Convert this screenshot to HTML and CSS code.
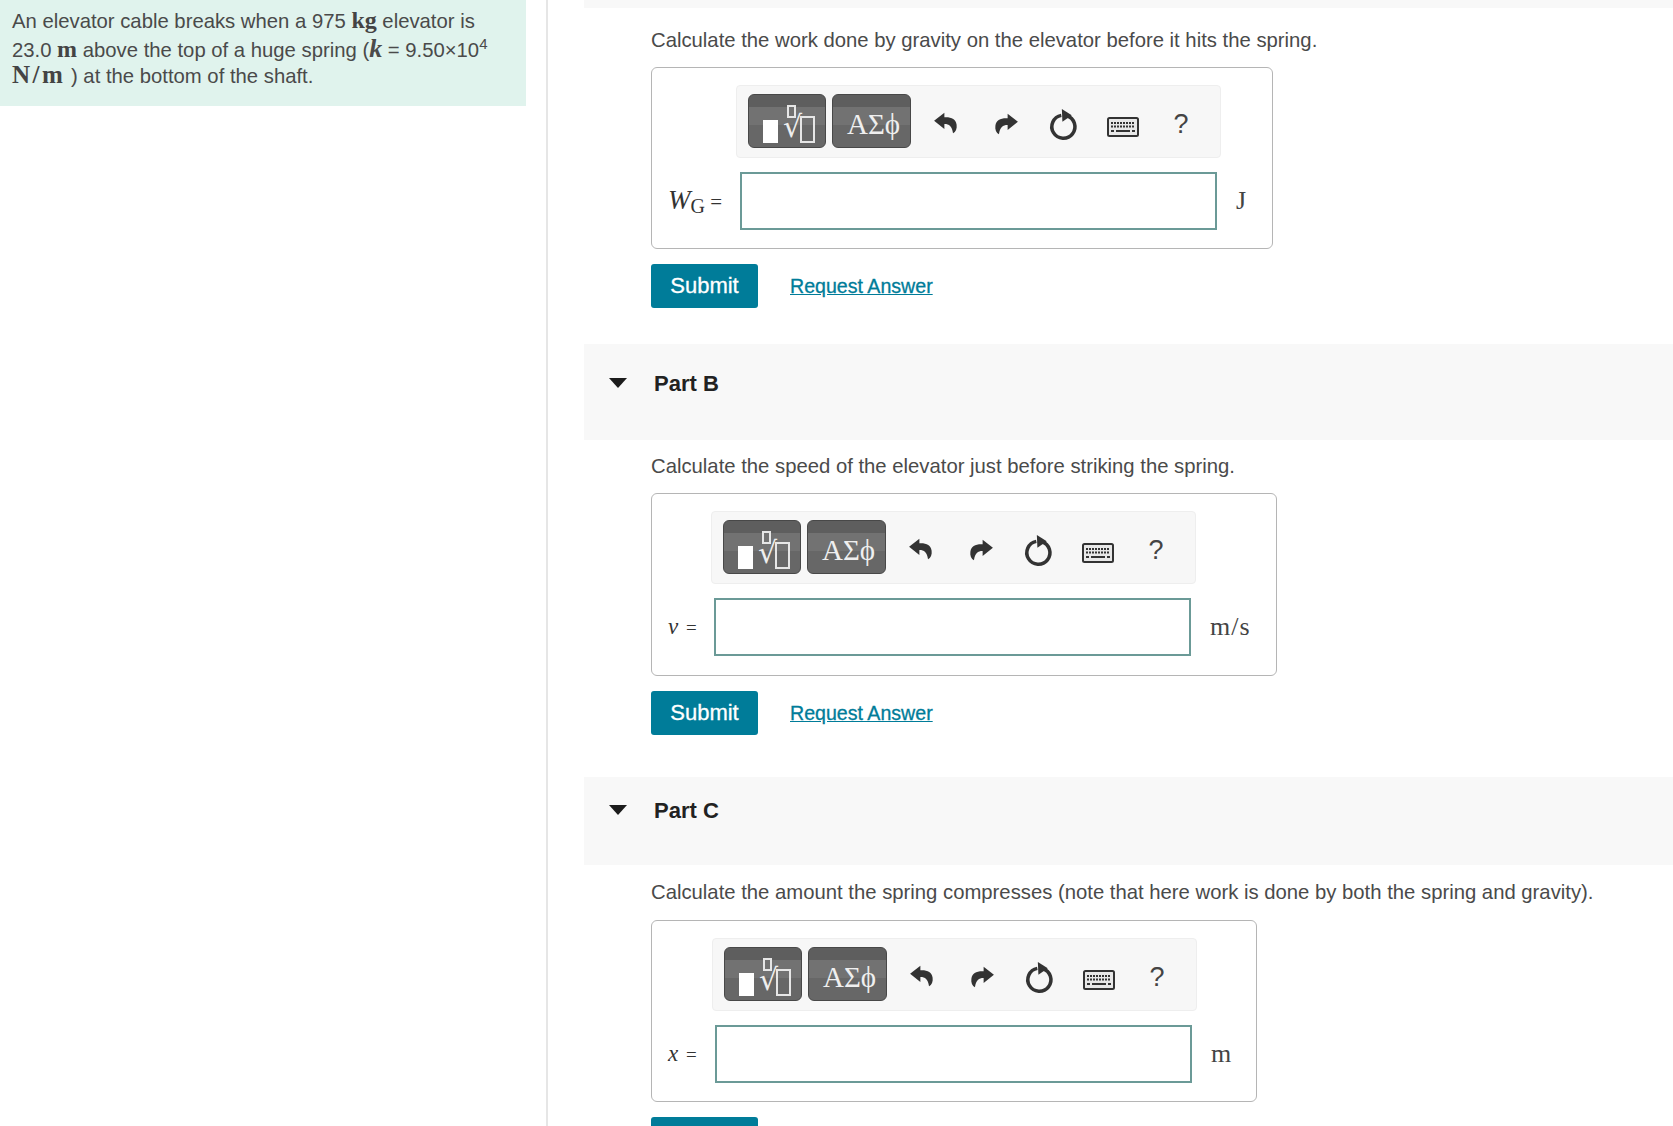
FILE: index.html
```html
<!DOCTYPE html>
<html lang="en">
<head>
<meta charset="utf-8">
<title>Elevator problem</title>
<link rel="stylesheet" href="styles.css">
</head>
<body>
<svg class="defs" aria-hidden="true">
  <defs>
    <symbol id="i-undo" viewBox="0 0 24 24"><path d="M10.500 2.500 1 10l9.500 7.500v-4.600c4.500 0 7 2 8 8.600 2.500-1.500 3.800-4.500 3.300-8C21 8.200 17 6.400 10.500 6.700z"/></symbol>
    <symbol id="i-redo" viewBox="0 0 24 24"><path d="M13.500 2.500 23 10l-9.500 7.500v-4.600c-4.500 0-7 2-8 8.600-2.500-1.500-3.800-4.500-3.300-8C3 8.200 7 6.400 13.500 6.700z"/></symbol>
    <symbol id="i-reset" viewBox="0 0 30 30"><path d="M18 7a10.500 10.500 0 1 1-5-.3" fill="none" stroke="currentColor" stroke-width="3.200"/><path d="M13.500 1 22.500 6.500 14 12.500z" fill="currentColor"/></symbol>
    <symbol id="i-keys" viewBox="0 0 32 20"><rect x="1" y="1" width="30" height="18" rx="1.500" fill="#e8e8e8" stroke="#333" stroke-width="2"/><path d="M4 6h24M4 9.500h24" stroke="#333" stroke-width="2" stroke-dasharray="2 1"/><path d="M4 14h3M9 14h14M25 14h3" stroke="#333" stroke-width="2"/></symbol>
  </defs>
</svg>
<div class="page">
  <aside class="side">
    <div class="problem">
      <p class="problem-line">An elevator cable breaks when a 975 <b class="m-b">kg</b> elevator is</p>
      <p class="problem-line problem-line-2">23.0 <b class="m-b">m</b> above the top of a huge spring (<i class="m-i m-k">k</i> = 9.50×10<sup class="sup">4</sup></p>
      <p class="problem-line"><b class="m-b m-wide">N/m</b> ) at the bottom of the shaft.</p>
    </div>
  </aside>
  <main class="content">
    <div class="top-bar"></div>

    <section class="part part-a">
      <p class="prompt">Calculate the work done by gravity on the elevator before it hits the spring.</p>
      <div class="answer answer-a">
        <div class="toolbar">
          <span class="tpl"><span class="tpl-block"></span><span class="tpl-root"><span class="tpl-idx"></span><span class="tpl-rad">√</span><span class="tpl-box"></span></span></span>
          <span class="tpl tpl-greek">ΑΣϕ</span>
          <svg class="ic ic-undo"><use href="#i-undo"/></svg>
          <svg class="ic ic-redo"><use href="#i-redo"/></svg>
          <svg class="ic ic-reset"><use href="#i-reset"/></svg>
          <svg class="ic ic-keys"><use href="#i-keys"/></svg>
          <span class="ic-help">?</span>
        </div>
        <label class="lbl"><i class="m-i m-w">W</i><sub class="sub">G</sub> =</label>
        <input class="field" type="text" aria-label="W G">
        <span class="unit">J</span>
      </div>
      <div class="actions"><button class="submit">Submit</button><a class="link" href="#">Request Answer</a></div>
    </section>

    <section class="part">
      <header class="part-head"><span class="caret"></span><h2 class="part-title">Part B</h2></header>
      <p class="prompt">Calculate the speed of the elevator just before striking the spring.</p>
      <div class="answer answer-b">
        <div class="toolbar">
          <span class="tpl"><span class="tpl-block"></span><span class="tpl-root"><span class="tpl-idx"></span><span class="tpl-rad">√</span><span class="tpl-box"></span></span></span>
          <span class="tpl tpl-greek">ΑΣϕ</span>
          <svg class="ic ic-undo"><use href="#i-undo"/></svg>
          <svg class="ic ic-redo"><use href="#i-redo"/></svg>
          <svg class="ic ic-reset"><use href="#i-reset"/></svg>
          <svg class="ic ic-keys"><use href="#i-keys"/></svg>
          <span class="ic-help">?</span>
        </div>
        <label class="lbl lbl-small"><i class="m-i m-i-small">v</i> =</label>
        <input class="field" type="text" aria-label="v">
        <span class="unit unit-wide">m/s</span>
      </div>
      <div class="actions"><button class="submit">Submit</button><a class="link" href="#">Request Answer</a></div>
    </section>

    <section class="part part-c">
      <header class="part-head part-head-c"><span class="caret"></span><h2 class="part-title">Part C</h2></header>
      <p class="prompt">Calculate the amount the spring compresses (note that here work is done by both the spring and gravity).</p>
      <div class="answer answer-c">
        <div class="toolbar">
          <span class="tpl"><span class="tpl-block"></span><span class="tpl-root"><span class="tpl-idx"></span><span class="tpl-rad">√</span><span class="tpl-box"></span></span></span>
          <span class="tpl tpl-greek">ΑΣϕ</span>
          <svg class="ic ic-undo"><use href="#i-undo"/></svg>
          <svg class="ic ic-redo"><use href="#i-redo"/></svg>
          <svg class="ic ic-reset"><use href="#i-reset"/></svg>
          <svg class="ic ic-keys"><use href="#i-keys"/></svg>
          <span class="ic-help">?</span>
        </div>
        <label class="lbl lbl-small"><i class="m-i m-i-small">x</i> =</label>
        <input class="field" type="text" aria-label="x">
        <span class="unit">m</span>
      </div>
      <div class="actions"><button class="submit" aria-label="Submit"></button></div>
    </section>
  </main>
</div>
</body>
</html>
```
FILE: styles.css
```css
* { box-sizing: border-box; }
html, body { margin: 0; height: 100%; overflow: hidden; background: #fff; }
body { font-family: "Liberation Sans", Arial, sans-serif; color: #4a4a4a; font-size: 20px; }
.defs { display: none; }
.page { display: flex; height: 1126px; overflow: hidden; }
.side { width: 548px; flex: none; border-right: 2px solid #e6e6e6; }
.problem { width: 526px; height: 106px; background: #e0f3ed; padding: 8px 12px 0; }
.problem-line { margin: 0; font-size: 20.300px; line-height: 26px; height: 26px; white-space: nowrap; }
.problem-line-2 { height: 28px; padding-top: 2px; }
.m-b { font-family: "Liberation Serif", serif; font-weight: 700; font-size: 24px; line-height: 1; color: #444; }
.m-wide { font-size: 25px; letter-spacing: 2.500px; }
.m-i { font-family: "Liberation Serif", serif; font-style: italic; font-size: 24px; line-height: 1; }
.m-k { font-size: 26px; font-weight: 700; }
.m-w { font-size: 27px; }
.m-i-small { font-size: 23px; }
.sup { font-size: 15px; line-height: 0; vertical-align: 8px; }
.sub { font-family: "Liberation Serif", serif; font-size: 20px; line-height: 0; vertical-align: -4px; }
.content { flex: 1; min-width: 0; padding-left: 36px; }
.top-bar { height: 8px; background: #f8f8f8; }
.prompt { margin: 0 0 15px 67px; font-size: 20.300px; line-height: 24px; white-space: nowrap; }
.part-a .prompt { margin-top: 20px; }
.part-c { padding-top: 6px; }
.part-c .prompt { margin-bottom: 16px; }
.part-head { display: flex; align-items: flex-start; height: 96px; margin-bottom: 14px; padding: 27px 0 0 25px; background: #f8f8f8; }
.part-head-c { height: 88px; margin-bottom: 15px; padding-top: 21px; }
.caret { width: 0; height: 0; margin-top: 7px; border-left: 9px solid transparent; border-right: 9px solid transparent; border-top: 10px solid #1c1c1c; }
.part-title { margin: 0 0 0 27px; font-size: 22px; line-height: 26px; font-weight: 700; color: #222; }
.answer { display: grid; grid-template-columns: 33px 477px auto; column-gap: 14px; row-gap: 14px; align-items: center; align-content: start; justify-content: start; height: 182px; margin-left: 67px; padding: 17px 0 0 16px; background: #fff; border: 1px solid #b5b5b5; border-radius: 6px; }
.answer-a { width: 622px; grid-template-columns: 58px 477px auto; }
.answer-b { width: 626px; height: 183px; grid-template-columns: 32px 477px auto; }
.answer-c { width: 606px; }
.toolbar { grid-column: 2; display: flex; align-items: center; width: 485px; height: 73px; margin: 0 -4px; padding: 0 11px 2px; background: #f7f7f7; border: 1px solid #eeeeee; border-radius: 4px; }
.answer-b .toolbar, .answer-c .toolbar { margin: 0 -3px; }
.tpl { display: flex; align-items: flex-end; flex: none; width: 78px; height: 54px; margin-right: 6px; padding: 0 4px 4px 14px; border: 1px solid #484848; border-radius: 6px; background: linear-gradient(#5e5e5e 0 12px, #727272 12px 30px, #676767 30px); color: #fff; overflow: hidden; }
.tpl-block { width: 15px; height: 23px; background: #fff; }
.tpl-root { display: flex; align-items: flex-end; height: 40px; margin-left: 5px; position: relative; }
.tpl-idx { position: absolute; left: 4px; top: 2px; width: 9px; height: 13px; border: 2px solid #e6e6e6; }
.tpl-rad { font-family: "DejaVu Sans", sans-serif; font-size: 30px; line-height: 32px; color: #eee; }
.tpl-box { width: 15px; height: 27px; margin-left: -2px; border: 2px solid #e6e6e6; }
.tpl-greek { align-items: center; justify-content: center; padding: 8px 0 0 4px; font-family: "Liberation Serif", serif; font-size: 29px; line-height: 1; color: #efefef; width: 79px; }
.ic { display: block; flex: none; fill: #333; color: #333; }
.ic-undo { width: 26px; height: 28px; margin-left: 16px; margin-top: 5px; }
.ic-redo { width: 26px; height: 28px; margin-left: 34px; margin-top: 7px; }
.ic-reset { width: 33px; height: 35px; margin-left: 28px; margin-top: 7px; }
.ic-keys { width: 32px; height: 20px; margin-left: 27px; margin-top: 13px; }
.ic-help { flex: none; width: 18px; margin-left: 33px; font-size: 27px; line-height: 1; color: #444; text-align: center; margin-top: 7px; }
.lbl { grid-column: 1; grid-row: 2; font-family: "Liberation Serif", serif; font-size: 21px; color: #333; white-space: nowrap; }
.lbl-small { font-size: 19px; letter-spacing: 1.500px; }
.field { grid-column: 2; grid-row: 2; width: 477px; height: 58px; margin: 0; padding: 0 6px; background: #fff; border: 2px solid #6b9a97; border-radius: 0; outline: none; }
.unit { grid-column: 3; grid-row: 2; font-family: "Liberation Serif", serif; font-size: 26px; color: #444; padding-left: 5px; white-space: nowrap; }
.unit-wide { letter-spacing: 1px; }
.actions { display: flex; align-items: center; margin: 15px 0 36px 67px; }
.submit { width: 107px; height: 44px; padding: 0; background: #007c99; color: #fff; border: 0; border-radius: 3px; font-family: "Liberation Sans", Arial, sans-serif; font-size: 22px; font-weight: 400; -webkit-text-stroke: .3px #fff; }
.link { margin-left: 32px; font-size: 19.600px; color: #007c99; text-decoration: underline; -webkit-text-stroke: .3px #007c99; }
```
